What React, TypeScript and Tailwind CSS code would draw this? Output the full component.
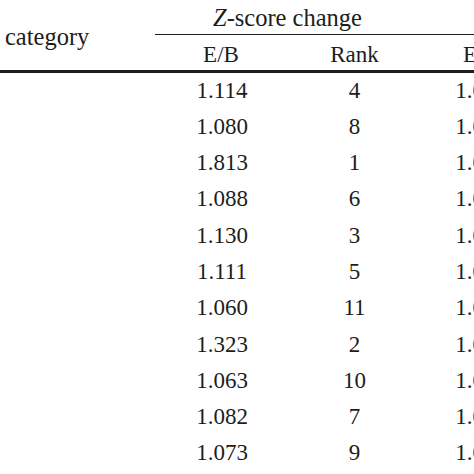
import React from "react";

const rows: [string, string][] = [
  ["1.114", "4"],
  ["1.080", "8"],
  ["1.813", "1"],
  ["1.088", "6"],
  ["1.130", "3"],
  ["1.111", "5"],
  ["1.060", "11"],
  ["1.323", "2"],
  ["1.063", "10"],
  ["1.082", "7"],
  ["1.073", "9"],
];

export default function App() {
  return (
    <div
      className="w-[474px] h-[474px] overflow-hidden bg-white text-[#1d1d1b] text-[23px]"
      style={{ fontFamily: '"Liberation Serif", "Times New Roman", serif' }}
    >
      <div className="w-[560px]">
        {/* header */}
        <div className="flex">
          <div className="w-[155px] shrink-0 pl-[5px] pt-[23px] leading-[27px] h-[70px] text-[24.5px]">
            category
          </div>
          <div className="flex flex-col">
            <div className="w-[265px] text-center h-[34px] leading-[34px] pt-[1px] text-[24.5px]">
              <span className="italic">Z</span>-score change
            </div>
            <div className="h-px w-[405px] bg-[#1d1d1b]" />
            <div className="flex h-[35px] leading-[35px] pt-[2px]">
              <div className="w-[134px] text-center pr-[2px]">E/B</div>
              <div className="w-[131px] text-center">Rank</div>
              <div className="w-[122px] text-center">E/B</div>
            </div>
          </div>
        </div>
        <div className="h-[2.5px] w-full bg-[#1d1d1b]" />
        {/* body */}
        <div className="flex flex-col">
          {rows.map(([a, b], i) => (
            <div key={i} className="flex h-[36.3px] leading-[36.3px]">
              <div className="w-[155px] shrink-0" />
              <div className="w-[134px] text-center">{a}</div>
              <div className="w-[131px] text-center">{b}</div>
              <div className="w-[122px] text-center">1.000</div>
            </div>
          ))}
        </div>
      </div>
    </div>
  );
}
